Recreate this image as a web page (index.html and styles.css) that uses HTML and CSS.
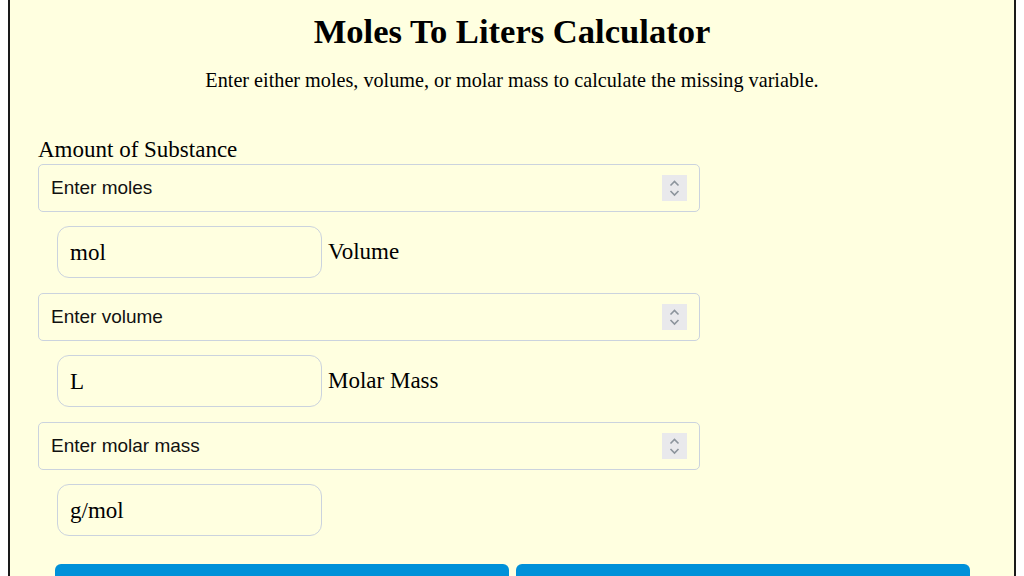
FILE: index.html
```html
<!DOCTYPE html>
<html lang="en">
<head>
    <meta charset="UTF-8">
    <meta name="viewport" content="width=device-width, initial-scale=1.0">
    <title>Moles To Liters Calculator</title>
    <link rel="stylesheet" href="styles.css">
</head>
<body>

    <div class="container">
        <h1>Moles To Liters Calculator</h1>
        <p class="subtitle">Enter either moles, volume, or molar mass to calculate the missing variable.</p>

        <div class="calc-form">
            <label class="field-label" for="moles">Amount of Substance</label>
            <div class="num-input">
                <input type="text" id="moles" placeholder="Enter moles">
                <span class="spinner">
                    <svg width="25" height="26" viewBox="0 0 25 26"><path d="M8.5 10.5 L12.5 6.5 L16.5 10.5 M8.5 16 L12.5 20 L16.5 16" fill="none" stroke="#8c949c" stroke-width="1.6"/></svg>
                </span>
            </div>
            <div class="unit-row">
                <select class="unit-select"><option>mol</option></select>
                <label class="field-label" for="volume">Volume</label>
            </div>

            <div class="num-input">
                <input type="text" id="volume" placeholder="Enter volume">
                <span class="spinner">
                    <svg width="25" height="26" viewBox="0 0 25 26"><path d="M8.5 10.5 L12.5 6.5 L16.5 10.5 M8.5 16 L12.5 20 L16.5 16" fill="none" stroke="#8c949c" stroke-width="1.6"/></svg>
                </span>
            </div>
            <div class="unit-row">
                <select class="unit-select"><option>L</option></select>
                <label class="field-label" for="molarMass">Molar Mass</label>
            </div>

            <div class="num-input">
                <input type="text" id="molarMass" placeholder="Enter molar mass">
                <span class="spinner">
                    <svg width="25" height="26" viewBox="0 0 25 26"><path d="M8.5 10.5 L12.5 6.5 L16.5 10.5 M8.5 16 L12.5 20 L16.5 16" fill="none" stroke="#8c949c" stroke-width="1.6"/></svg>
                </span>
            </div>
            <div class="unit-row">
                <select class="unit-select"><option>g/mol</option></select>
            </div>
        </div>

        <div class="btn-row">
            <button class="btn">Calculate</button>
            <button class="btn">Reset</button>
        </div>
    </div>

</body>
</html>
```

FILE: styles.css
```css
/* General */
body {
    margin: 0 8px;
    background: #ffffff;
    font-family: "Liberation Serif", "Times New Roman", serif;
    color: #000;
}
.container {
    background: #ffffe0;
    border: 2px solid #1a1a1a;
    border-top: none;
    padding-top: 11px;
    min-height: 700px;
}

/* Heading */
h1 {
    margin: 0;
    font-size: 34.6px;
    line-height: 40px;
    text-align: center;
}
.subtitle {
    margin: 18px 0 0;
    font-size: 20.2px;
    line-height: 22px;
    text-align: center;
}

/* Form */
.calc-form {
    margin-top: 46px;
    padding-left: 28px;
}
.field-label {
    display: block;
    font-size: 23px;
    line-height: 26px;
}
.num-input {
    display: flex;
    align-items: center;
    width: 662px;
    height: 48px;
    margin-top: 1px;
    box-sizing: border-box;
    border: 1px solid #cbd3de;
    border-radius: 5px;
    padding: 0 12px;
}
.num-input input {
    flex: 1;
    border: none;
    outline: none;
    background: transparent;
    padding: 0;
    font-family: "Liberation Sans", Arial, sans-serif;
    font-size: 19px;
    color: #111;
}
.num-input input::placeholder {
    color: #111;
}
.spinner {
    display: flex;
    width: 25px;
    height: 26px;
    background: #e9e9ec;
}
.unit-row {
    display: flex;
    align-items: center;
    gap: 6px;
    margin: 14px 0 15px 19px;
}
.unit-select {
    appearance: none;
    width: 265px;
    height: 52px;
    box-sizing: border-box;
    border: 1px solid #cbd3de;
    border-radius: 12px;
    padding: 0 12px;
    background: transparent;
    font-family: "Liberation Serif", "Times New Roman", serif;
    font-size: 23px;
    color: #000;
}

/* Buttons */
.btn-row {
    display: flex;
    gap: 7px;
    width: 915px;
    margin: 28px auto 0;
}
.btn {
    flex: 1;
    height: 90px;
    padding-top: 40px;
    border: none;
    border-radius: 6px;
    background: #0091d9;
    color: white;
    font-size: 18px;
}
```
